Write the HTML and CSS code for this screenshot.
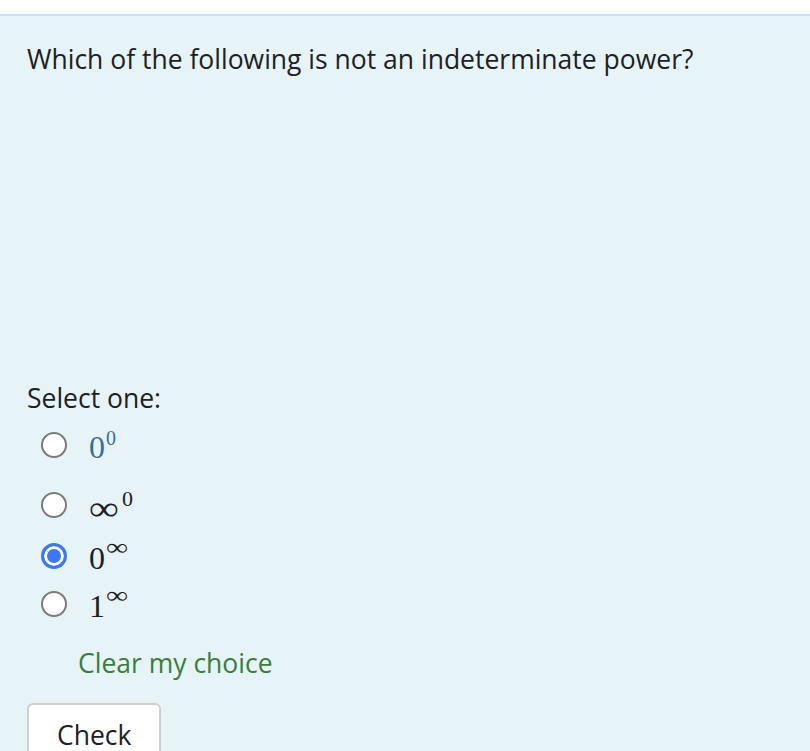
FILE: index.html
```html
<!DOCTYPE html>
<html lang="en">
<head>
<meta charset="utf-8">
<title>Question</title>
<link rel="stylesheet" href="styles.css">
</head>
<body>
<div class="que">
  <div class="qtext">Which of the following is not an indeterminate power?</div>
  <div class="ablock">
    <div class="prompt">Select one:</div>
    <div class="answer">
      <label class="opt">
        <span class="radio"></span>
        <span class="math hover">0<sup>0</sup></span>
      </label>
      <label class="opt opt-b">
        <span class="radio"></span>
        <span class="math"><span class="inf-big">&#8734;</span><sup class="sup-b">0</sup></span>
      </label>
      <label class="opt opt-c">
        <span class="radio checked"></span>
        <span class="math">0<sup><span class="inf-sm">&#8734;</span></sup></span>
      </label>
      <label class="opt">
        <span class="radio"></span>
        <span class="math">1<sup><span class="inf-sm">&#8734;</span></sup></span>
      </label>
    </div>
    <div class="clear"><a class="clear-link" href="#">Clear my choice</a></div>
  </div>
  <div class="actions">
    <button class="btn">Check</button>
  </div>
</div>
</body>
</html>
```
FILE: styles.css
```css
* { box-sizing: border-box; }
html, body { margin: 0; padding: 0; }
body {
  background: #ffffff;
  font-family: "Open Sans", "Noto Sans", sans-serif;
  color: #1d2125;
  font-size: 26.5px;
  overflow: hidden;
}
.que {
  margin-top: 14px;
  border-top: 2px solid #c5e3ec;
  background: #e7f4f7;
  padding: 25px 27px 0;
  height: 737px;
  overflow: hidden;
}
.qtext {
  line-height: 36px;
  height: 339px;
}
.prompt {
  line-height: 36px;
  margin-bottom: 5px;
}
.answer {
  display: flex;
  flex-direction: column;
  padding-left: 14px;
}
.opt {
  display: flex;
  align-items: center;
  gap: 22px;
  height: 48px;
}
.opt-b { margin-top: 12px; }
.opt-c { margin-top: 3px; }
.radio {
  width: 26px;
  height: 26px;
  border: 2px solid #7a7a7a;
  border-radius: 50%;
  background: #fff;
  flex: none;
}
.radio.checked {
  border: 3px solid #3c78f2;
  box-shadow: inset 0 0 0 3px #fff;
  background: #3c78f2;
}
.math {
  font-family: "Liberation Serif", "DejaVu Serif", serif;
  font-size: 32px;
  color: #1d2125;
  line-height: 1;
  white-space: nowrap;
  position: relative;
  top: 2px;
}
.math.hover { color: #3f6d8e; }
.math sup {
  font-size: 20px;
  vertical-align: 0;
  position: relative;
  top: -13px;
  margin-left: 1px;
}
.math sup.sup-b {
  font-size: 22px;
  top: -15px;
  margin-left: 3px;
}
.inf-big {
  display: inline-block;
  font-size: 42px;
  transform: scaleY(0.82);
  transform-origin: 50% 75%;
}
.inf-sm {
  display: inline-block;
  font-size: 31px;
  transform: scaleY(0.75);
  transform-origin: 50% 50%;
  position: relative;
  top: 2px;
}
.clear {
  padding-left: 51px;
  margin-top: 17px;
  line-height: 36px;
}
.clear-link {
  color: #3a7d3d;
  text-decoration: none;
}
.actions {
  margin-top: 22px;
}
.btn {
  font-family: "Open Sans", "Noto Sans", sans-serif;
  font-size: 26.5px;
  color: #1d2125;
  background: #fff;
  border: 2px solid #cfcfcf;
  border-radius: 6px;
  padding: 12px 28px;
  width: 134px;
  text-align: left;
}
```
